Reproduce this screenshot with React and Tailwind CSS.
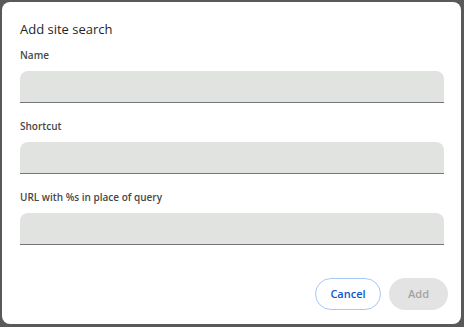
const fields = [
  { label: 'Name' },
  { label: 'Shortcut' },
  { label: 'URL with %s in place of query' },
];

export default function App() {
  return (
    <div className="w-[464px] h-[327px] bg-[#595959] pt-[2px] pl-[2px] pr-[3px] pb-[3px] font-['Open_Sans',sans-serif]">
      <div className="h-full bg-white rounded-[8px] flex flex-col pl-[18px] pr-[17px]">
        <h1 className="mt-[17px] text-[13px] leading-[20px] text-[#1f1f1f]">Add site search</h1>

        <div className="mt-[9px] flex flex-col gap-[16px]">
          {fields.map(({ label }) => (
            <div key={label} className="flex flex-col">
              <label className="text-[10px] leading-[14px] font-semibold text-[#474747] mb-[9px]">{label}</label>
              <div className="h-[32px] bg-[#e1e3e1] rounded-t-[8px] border-b border-[#747775]" />
            </div>
          ))}
        </div>

        <div className="mt-auto mb-[14px] flex justify-end gap-[8px] mr-[-4px]">
          <button className="h-[32px] w-[66px] rounded-full border border-[#a8c7fa] text-[#0b57d0] text-[11px] font-semibold">
            Cancel
          </button>
          <button className="h-[32px] w-[59px] rounded-full bg-[#e3e3e3] text-[#a3a3a3] text-[11px] font-semibold">
            Add
          </button>
        </div>
      </div>
    </div>
  );
}
